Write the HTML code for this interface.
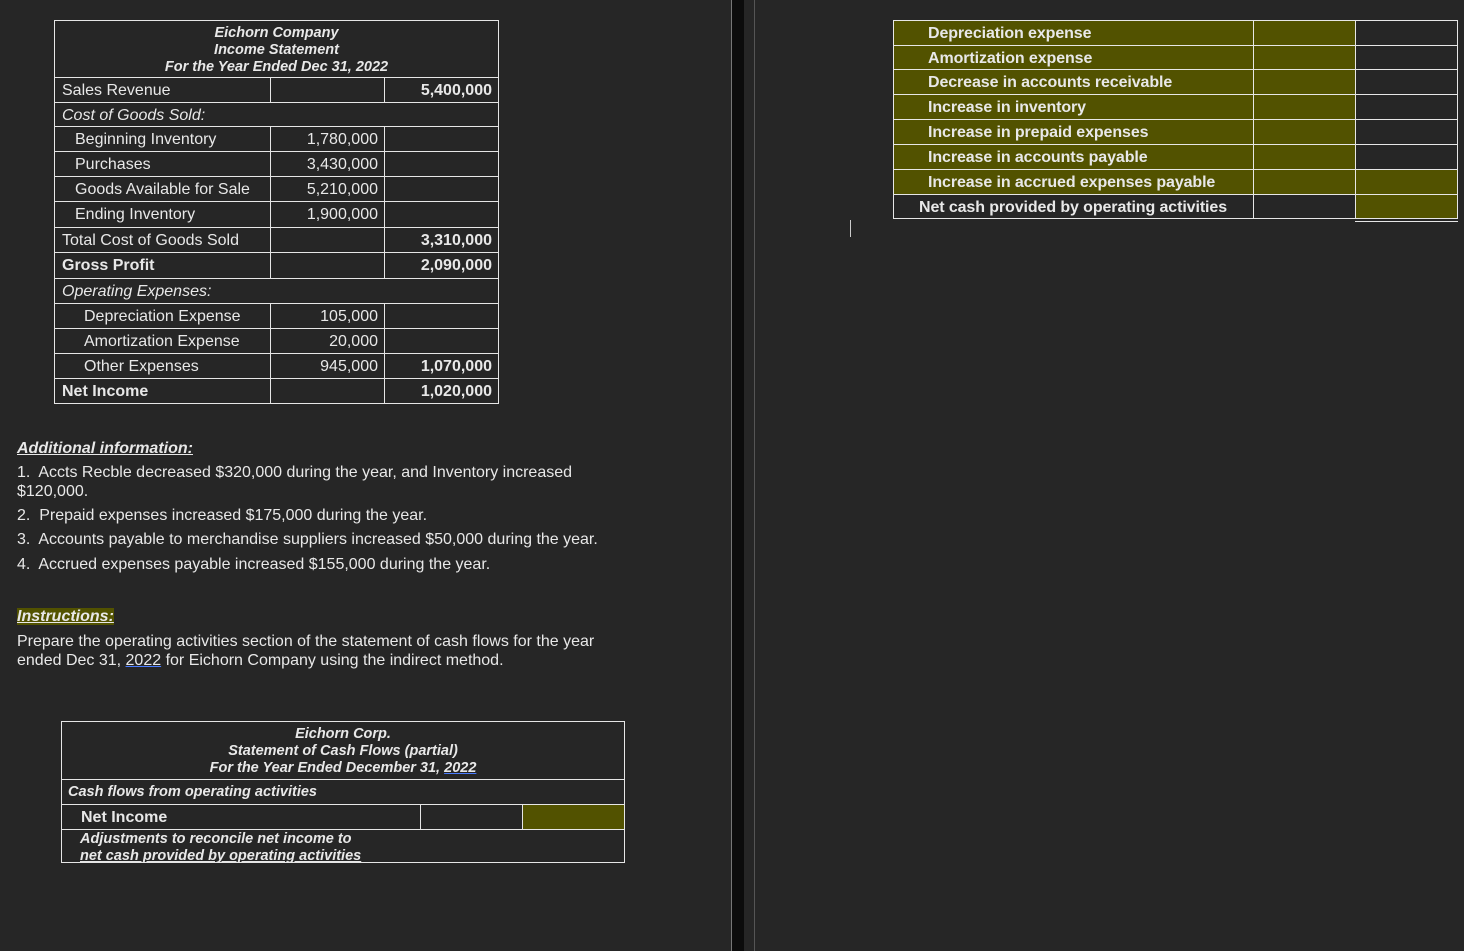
<!DOCTYPE html>
<html><head><meta charset="utf-8"><style>
body{margin:0;width:1464px;height:951px;background:#262626;position:relative;overflow:hidden;font-family:"Liberation Sans",Arial,sans-serif;color:#e8e8e8;font-size:16px}
.a{position:absolute;white-space:nowrap}
.l{position:absolute;background:#e6e6e6}
.b{font-weight:bold}
.i{font-style:italic}
.r{text-align:right}
.c{text-align:center}
.o{position:absolute;background:#525200}
</style></head><body>
<div class="a" style="left:731px;top:0;width:1px;height:951px;background:#777"></div>
<div class="a" style="left:732px;top:0;width:12px;height:951px;background:#0c0c0c"></div>
<div class="a" style="left:754px;top:0;width:1px;height:951px;background:#555"></div>

<div class="l" style="left:54px;top:20px;width:445px;height:1px"></div>
<div class="l" style="left:54px;top:20px;width:1px;height:384px"></div>
<div class="l" style="left:498px;top:20px;width:1px;height:384px"></div>
<div class="a c b i" style="left:54px;top:25px;width:445px;font-size:14.5px;line-height:17px">Eichorn Company<br>Income Statement<br>For the Year Ended Dec 31, 2022</div>
<div id="is"></div>

<div class="a b i" style="left:17px;top:440px;font-size:16px;text-decoration:underline">Additional information:</div>
<div class="a" style="left:17px;top:463px;line-height:19px;font-size:16px">1.&nbsp; Accts Recble decreased $320,000 during the year, and Inventory increased<br>$120,000.</div>
<div class="a" style="left:17px;top:507px;font-size:16px">2.&nbsp; Prepaid expenses increased $175,000 during the year.</div>
<div class="a" style="left:17px;top:531px;font-size:16px">3.&nbsp; Accounts payable to merchandise suppliers increased $50,000 during the year.</div>
<div class="a" style="left:17px;top:556px;font-size:16px">4.&nbsp; Accrued expenses payable increased $155,000 during the year.</div>
<div class="a b i" style="left:17px;top:608px;font-size:16px;line-height:17px;text-decoration:underline;background:#525200">Instructions:</div>
<div class="a" style="left:17px;top:632px;line-height:19px;font-size:16px">Prepare the operating activities section of the statement of cash flows for the year<br>ended Dec 31, <span style="text-decoration:underline;text-decoration-color:#4a7cff">2022</span> for Eichorn Company using the indirect method.</div>

<div class="l" style="left:61px;top:721px;width:564px;height:1px"></div>
<div class="l" style="left:61px;top:721px;width:1px;height:142px"></div>
<div class="l" style="left:624px;top:721px;width:1px;height:142px"></div>
<div class="l" style="left:61px;top:779px;width:564px;height:1px"></div>
<div class="l" style="left:61px;top:804px;width:564px;height:1px"></div>
<div class="l" style="left:61px;top:829px;width:564px;height:1px"></div>
<div class="l" style="left:61px;top:862px;width:564px;height:1px"></div>
<div class="l" style="left:420px;top:804px;width:1px;height:25px"></div>
<div class="l" style="left:522px;top:804px;width:1px;height:25px"></div>
<div class="o" style="left:523px;top:805px;width:101px;height:24px"></div>
<div class="a c b i" style="left:61px;top:726px;width:564px;font-size:14.5px;line-height:17px">Eichorn Corp.<br>Statement of Cash Flows (partial)<br>For the Year Ended December 31, <span style="text-decoration:underline;text-decoration-color:#4a7cff">2022</span></div>
<div class="a b i" style="left:68px;top:784px;font-size:14.5px">Cash flows from operating activities</div>
<div class="a b" style="left:81px;top:809px;font-size:16px">Net Income</div>
<div class="a b i" style="left:80px;top:831px;font-size:14.5px;line-height:17px">Adjustments to reconcile net income to<br><u>net cash provided by operating activities</u></div>

<div id="rt"></div>
<div class="a" style="left:850px;top:220px;width:1px;height:17px;background:#ccc"></div>

<script>
var is=document.getElementById('is'),h='';
var rows=[
[77,102,'Sales Revenue',0,'','5,400,000',0,0,1],
[102,126,'Cost of Goods Sold:',0,'','',0,1,0],
[126,151,'Beginning Inventory',13,'1,780,000','',0,0,1],
[151,176,'Purchases',13,'3,430,000','',0,0,1],
[176,201,'Goods Available for Sale',13,'5,210,000','',0,0,1],
[201,227,'Ending Inventory',13,'1,900,000','',0,0,1],
[227,252,'Total Cost of Goods Sold',0,'','3,310,000',0,0,1],
[252,278,'Gross Profit',0,'','2,090,000',1,0,1],
[278,303,'Operating Expenses:',0,'','',0,1,0],
[303,328,'Depreciation Expense',22,'105,000','',0,0,1],
[328,353,'Amortization Expense',22,'20,000','',0,0,1],
[353,378,'Other Expenses',22,'945,000','1,070,000',0,0,1],
[378,403,'Net Income',0,'','1,020,000',1,0,1]];
rows.forEach(function(r){
h+='<div class="l" style="left:54px;top:'+r[0]+'px;width:445px;height:1px"></div>';
if(r[8]){h+='<div class="l" style="left:270px;top:'+r[0]+'px;width:1px;height:'+(r[1]-r[0])+'px"></div><div class="l" style="left:384px;top:'+r[0]+'px;width:1px;height:'+(r[1]-r[0])+'px"></div>';}
var st='font-size:16px;top:'+(r[0]+5)+'px;';
h+='<div class="a'+(r[6]?' b':'')+(r[7]?' i':'')+'" style="'+st+'left:'+(62+r[3])+'px">'+r[2]+'</div>';
if(r[4])h+='<div class="a r" style="'+st+'left:270px;width:108px">'+r[4]+'</div>';
if(r[5])h+='<div class="a r b" style="'+st+'left:384px;width:108px">'+r[5]+'</div>';
});
h+='<div class="l" style="left:54px;top:403px;width:445px;height:1px"></div>';
is.innerHTML=h;
var rt=document.getElementById('rt'),g='';
var R=[20,45,69,94,119,144,169,194,218];
var L=['Depreciation expense','Amortization expense','Decrease in accounts receivable','Increase in inventory','Increase in prepaid expenses','Increase in accounts payable','Increase in accrued expenses payable','Net cash provided by operating activities'];
for(var k=0;k<8;k++){var t=R[k],b=R[k+1];
if(k<7)g+='<div class="o" style="left:893px;top:'+t+'px;width:462px;height:'+(b-t)+'px"></div>';
if(k>=6)g+='<div class="o" style="left:1355px;top:'+t+'px;width:102px;height:'+(b-t)+'px"></div>';
g+='<div class="a b" style="font-size:16px;letter-spacing:-0.1px;top:'+(t+5)+'px;left:'+(k==7?919:928)+'px">'+L[k]+'</div>';}
R.forEach(function(y){g+='<div class="l" style="left:893px;top:'+y+'px;width:565px;height:1px"></div>';});
g+='<div class="l" style="left:1355px;top:221px;width:103px;height:1px"></div>';
[893,1253,1355,1457].forEach(function(x){g+='<div class="l" style="left:'+x+'px;top:20px;width:1px;height:199px"></div>';});
rt.innerHTML=g;
</script>
</body></html>
